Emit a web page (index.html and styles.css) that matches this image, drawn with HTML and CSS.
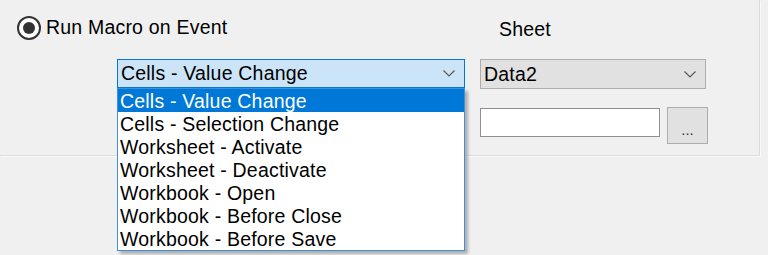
FILE: index.html
```html
<!DOCTYPE html>
<html lang="en">
<head>
    <meta charset="UTF-8">
    <meta name="viewport" content="width=device-width, initial-scale=1.0">
    <title>Run Macro on Event</title>
    <link rel="stylesheet" href="styles.css">
</head>
<body>
    <div class="group">
        <div class="top">
            <label class="option">
                <span class="radio"><span class="dot"></span></span>
                <span>Run Macro on Event</span>
            </label>
            <span class="sheet-label">Sheet</span>
        </div>
        <div class="combos">
            <div class="combo-wrap">
                <div class="combo open">
                    <span>Cells - Value Change</span>
                    <svg class="chevron" width="12" height="7" viewBox="0 0 12 7"><polyline points="0.5,0.5 6,6 11.5,0.5" fill="none" stroke="#5a5a5a" stroke-width="1.2"/></svg>
                </div>
                <ul class="list">
                    <li class="selected">Cells - Value Change</li>
                    <li>Cells - Selection Change</li>
                    <li>Worksheet - Activate</li>
                    <li>Worksheet - Deactivate</li>
                    <li>Workbook - Open</li>
                    <li>Workbook - Before Close</li>
                    <li>Workbook - Before Save</li>
                </ul>
            </div>
            <div class="combo sheet">
                <span>Data2</span>
                <svg class="chevron" width="12" height="7" viewBox="0 0 12 7"><polyline points="0.5,0.5 6,6 11.5,0.5" fill="none" stroke="#5a5a5a" stroke-width="1.2"/></svg>
            </div>
        </div>
        <div class="macro-row">
            <input type="text" class="macro-input">
            <button class="browse">...</button>
        </div>
    </div>
</body>
</html>
```

FILE: styles.css
```css
* {
    margin: 0;
    padding: 0;
    box-sizing: border-box;
    font-family: "Liberation Sans", Arial, sans-serif;
}
body {
    width: 768px;
    height: 255px;
    overflow: hidden;
    background: #f0f0f0;
    color: #000;
    font-size: 19.5px;
    letter-spacing: 0.2px;
}
.group {
    width: 760px;
    height: 156px;
    border-right: 1px solid #dcdcdc;
    border-bottom: 1px solid #dcdcdc;
    box-shadow: 1px 1px 0 #fafafa;
}
.top {
    display: grid;
    grid-template-columns: 482px auto;
    align-items: center;
    padding-top: 14px;
    height: 38px;
}
.option {
    display: flex;
    align-items: center;
    padding-left: 17px;
}
.radio {
    width: 24px;
    height: 24px;
    border: 2px solid #333;
    border-radius: 50%;
    background: #fff;
    display: flex;
    justify-content: center;
    align-items: center;
    margin-right: 5px;
}
.dot {
    width: 12px;
    height: 12px;
    border-radius: 50%;
    background: #333;
}
.sheet-label {
    padding-left: 17px;
    padding-top: 4px;
}
.combos {
    display: flex;
    gap: 15px;
    margin-top: 21px;
    padding-left: 117px;
}
.combo-wrap {
    position: relative;
    width: 348px;
}
.combo {
    display: flex;
    justify-content: space-between;
    align-items: center;
    height: 29px;
    line-height: 27px;
    padding: 0 9px 0 3px;
    border: 1px solid #adadad;
    background: #e1e1e1;
}
.combo.open {
    border-color: #0078d7;
    background: #cce4f7;
}
.combo.sheet {
    width: 226px;
    height: 30px;
}
.chevron {
    display: block;
}
.list {
    position: absolute;
    top: 29px;
    left: 0;
    width: 348px;
    list-style: none;
    background: #fff;
    border: 1px solid #3f8fdd;
    box-shadow: 3px 3px 3px rgba(0, 0, 0, 0.28);
    z-index: 2;
}
.list li {
    height: 23px;
    line-height: 24px;
    padding-left: 2px;
    white-space: nowrap;
}
.list li.selected {
    background: #0078d7;
    color: #fff;
}
.macro-row {
    display: flex;
    align-items: flex-start;
    gap: 7px;
    margin-top: 18px;
    padding-left: 480px;
}
.macro-input {
    width: 180px;
    height: 29px;
    margin-top: 1px;
    border: 1px solid #8f8f8f;
    background: #fff;
}
.browse {
    width: 41px;
    height: 37px;
    border: 1px solid #adadad;
    background: #e1e1e1;
    font-size: 15px;
    color: #333;
    padding-top: 7px;
}
```
